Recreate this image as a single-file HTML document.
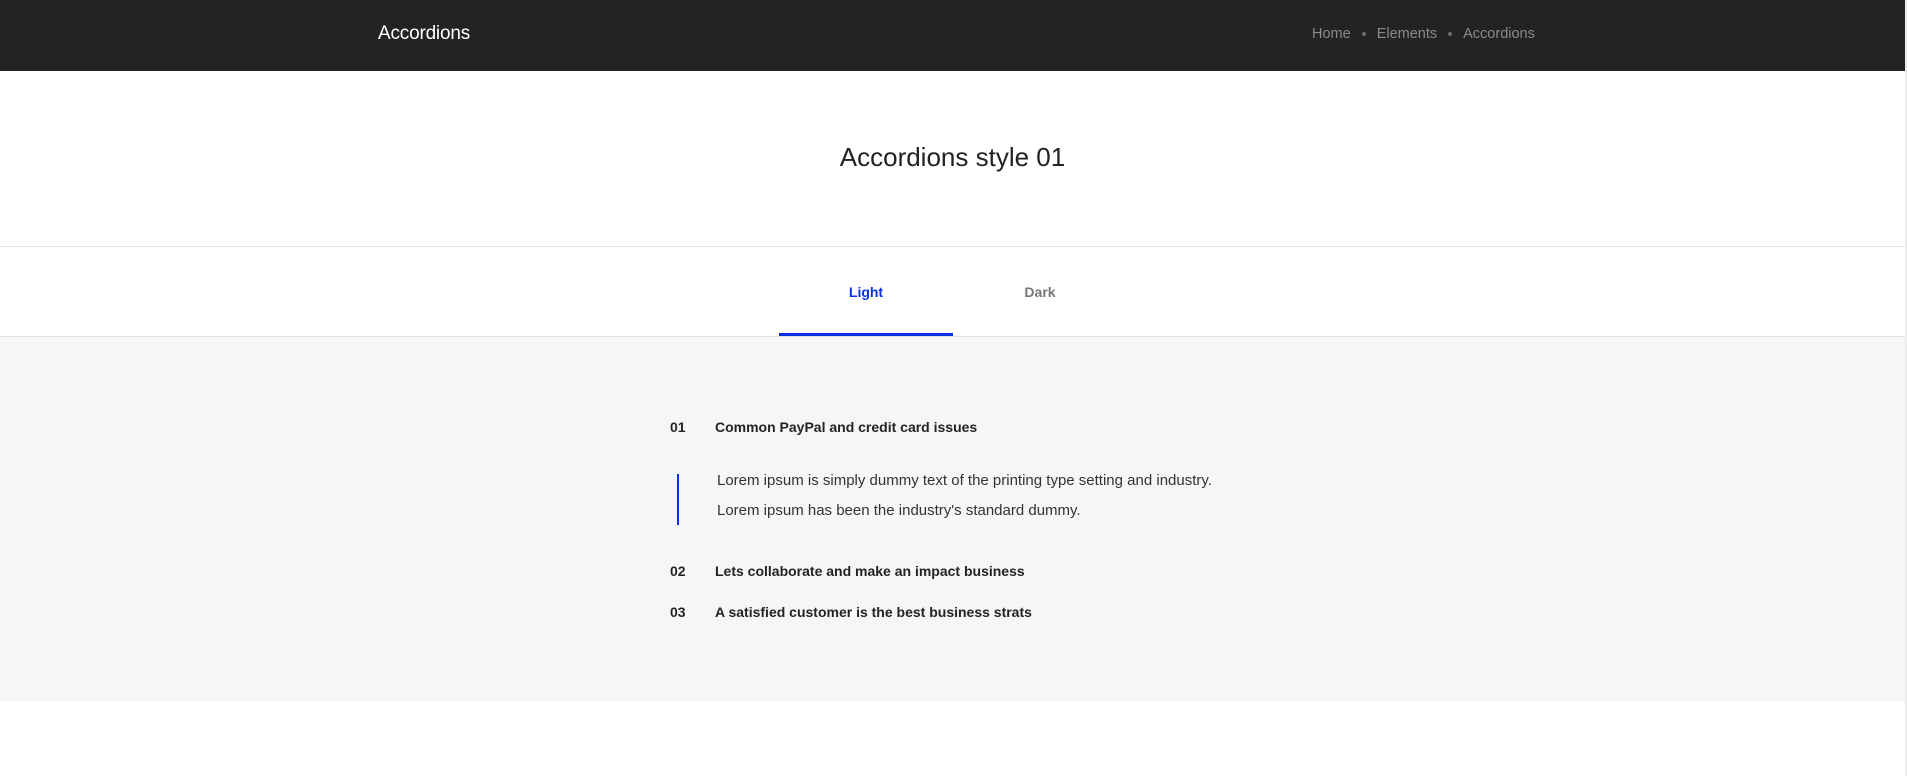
<!DOCTYPE html>
<html><head><meta charset="utf-8"><style>
*{margin:0;padding:0;box-sizing:border-box}
body{width:1907px;height:776px;overflow:hidden;background:#fff;font-family:"Liberation Sans",sans-serif;position:relative}
.sb{position:absolute;right:0;top:0;width:2px;height:776px;background:#ececec}
.hdr{position:absolute;left:0;top:0;width:1905px;height:71px;background:#232323}
.hdr .t{position:absolute;left:378px;top:23px;color:#fff;font-size:19px;letter-spacing:-0.2px}
.bc{position:absolute;left:1312px;top:26px;color:#8a8a8a;font-size:14.5px;white-space:nowrap}
.bc .d{display:inline-block;width:4px;height:4px;border-radius:50%;background:#6a6a6a;margin:0 11px;vertical-align:middle}
h1{position:absolute;left:0;width:1905px;top:142px;text-align:center;font-weight:normal;font-size:26px;color:#222}
.l1{position:absolute;left:0;top:246px;width:1905px;height:1px;background:#e2e2e2}
.tab{position:absolute;top:284px;font-size:14px;font-weight:bold;text-align:center;width:174px}
.gray{position:absolute;left:0;top:336px;width:1905px;height:366px;background:#f6f6f6;border-top:1px solid #e2e2e2}
.ul{position:absolute;left:779px;top:333px;width:174px;height:3px;background:#0a30e6}
.it{position:absolute;left:670px;font-size:14px;font-weight:bold;color:#232323;white-space:nowrap}
.it span{position:absolute;left:45px}
.p{position:absolute;left:717px;font-size:15px;color:#333;white-space:nowrap}
.bar{position:absolute;left:677px;top:474px;width:2px;height:51px;background:#0a30e6}
</style></head><body>
<div class="hdr"><div class="t">Accordions</div>
<div class="bc">Home<span class="d"></span>Elements<span class="d"></span>Accordions</div></div>
<h1>Accordions style 01</h1>
<div class="l1"></div>
<div class="tab" style="left:779px;color:#0a30e6">Light</div>
<div class="tab" style="left:953px;color:#777">Dark</div>
<div class="gray"></div>
<div class="ul"></div>
<div class="it" style="top:419px">01<span>Common PayPal and credit card issues</span></div>
<div class="bar"></div>
<div class="p" style="top:472px">Lorem ipsum is simply dummy text of the printing type setting and industry.</div>
<div class="p" style="top:502px">Lorem ipsum has been the industry's standard dummy.</div>
<div class="it" style="top:563px">02<span>Lets collaborate and make an impact business</span></div>
<div class="it" style="top:604px">03<span>A satisfied customer is the best business strats</span></div>
<div class="sb"></div>
</body></html>
